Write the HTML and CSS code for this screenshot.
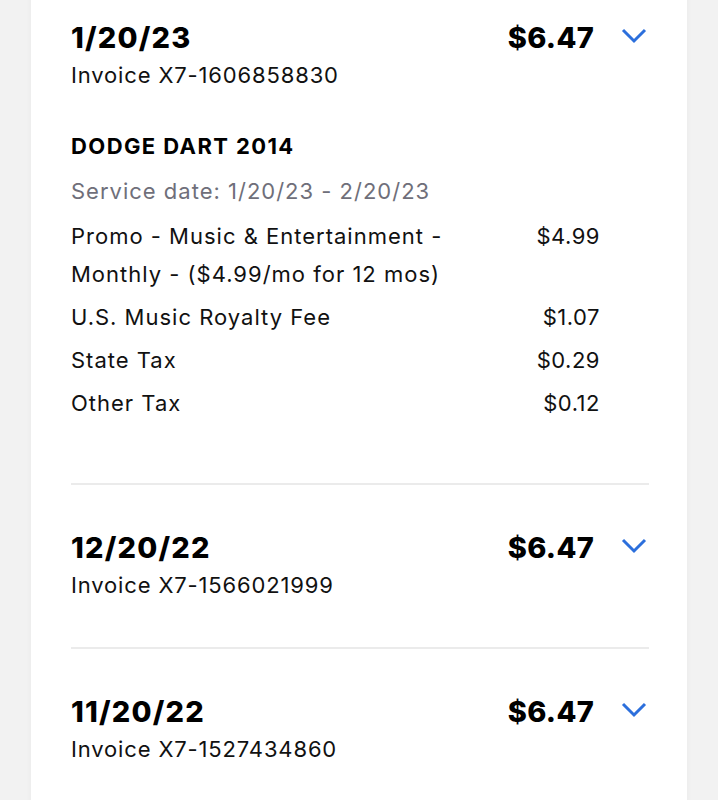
FILE: index.html
```html
<!DOCTYPE html>
<html lang="en">
<head>
    <meta charset="UTF-8">
    <meta name="viewport" content="width=device-width, initial-scale=1.0">
    <title>Billing History</title>
    <link rel="stylesheet" href="styles.css">
</head>
<body>
    <div class="card">
        <div class="invoice">
            <div class="invoice-head">
                <div class="invoice-title">
                    <div class="invoice-date">1/20/23</div>
                    <div class="invoice-number">Invoice X7-1606858830</div>
                </div>
                <div class="invoice-total">$6.47</div>
                <svg class="chevron" width="26" height="16" viewBox="0 0 26 16"><polyline points="2,2 13,13 24,2"/></svg>
            </div>
            <div class="invoice-details">
                <div class="vehicle">DODGE DART 2014</div>
                <div class="service-date">Service date: 1/20/23 - 2/20/23</div>
                <div class="items">
                    <div class="item">
                        <span class="item-name">Promo - Music &amp; Entertainment - Monthly - ($4.99/mo for 12 mos)</span>
                        <span class="item-price">$4.99</span>
                    </div>
                    <div class="item">
                        <span class="item-name">U.S. Music Royalty Fee</span>
                        <span class="item-price">$1.07</span>
                    </div>
                    <div class="item">
                        <span class="item-name">State Tax</span>
                        <span class="item-price">$0.29</span>
                    </div>
                    <div class="item">
                        <span class="item-name">Other Tax</span>
                        <span class="item-price">$0.12</span>
                    </div>
                </div>
            </div>
        </div>

        <div class="invoice">
            <div class="invoice-head">
                <div class="invoice-title">
                    <div class="invoice-date">12/20/22</div>
                    <div class="invoice-number">Invoice X7-1566021999</div>
                </div>
                <div class="invoice-total">$6.47</div>
                <svg class="chevron" width="26" height="16" viewBox="0 0 26 16"><polyline points="2,2 13,13 24,2"/></svg>
            </div>
        </div>

        <div class="invoice">
            <div class="invoice-head">
                <div class="invoice-title">
                    <div class="invoice-date">11/20/22</div>
                    <div class="invoice-number">Invoice X7-1527434860</div>
                </div>
                <div class="invoice-total">$6.47</div>
                <svg class="chevron" width="26" height="16" viewBox="0 0 26 16"><polyline points="2,2 13,13 24,2"/></svg>
            </div>
        </div>
    </div>
</body>
</html>
```

FILE: styles.css
```css
body {
    font-family: 'Inter', 'Noto Sans', sans-serif;
    margin: 0;
    background-color: #f2f2f2;
    color: #111;
    overflow: hidden;
}
.card {
    margin: -25px 31px 0;
    padding: 0 38px 0 40px;
    background-color: #fff;
    box-shadow: 0 0 6px rgba(0,0,0,0.04);
    min-height: 900px;
}
.invoice {
    padding: 45px 0 48px;
    border-bottom: 2px solid #ebebeb;
}
.invoice-head {
    display: flex;
    align-items: flex-start;
}
.invoice-title {
    flex-grow: 1;
}
.invoice-date {
    font-size: 29px;
    font-weight: 800;
    line-height: 36px;
    letter-spacing: 1.2px;
    color: #000;
}
.invoice-number {
    margin-top: 5px;
    font-size: 22px;
    line-height: 28px;
    letter-spacing: 0.85px;
}
.invoice-total {
    font-size: 29px;
    font-weight: 800;
    line-height: 36px;
    letter-spacing: 0.3px;
    color: #000;
    margin-right: 27px;
}
.chevron {
    margin-top: 8px;
    margin-right: 2px;
    fill: none;
    stroke: #2c6fdc;
    stroke-width: 3;
}
.invoice-details {
    padding-top: 43px;
    padding-bottom: 13px;
}
.vehicle {
    font-size: 22px;
    font-weight: 700;
    line-height: 28px;
    letter-spacing: 1.4px;
    color: #000;
}
.service-date {
    margin-top: 17px;
    font-size: 22px;
    line-height: 28px;
    letter-spacing: 1px;
    color: #6f6f7a;
}
.items {
    margin-top: 12px;
    width: 529px;
    display: flex;
    flex-direction: column;
    gap: 5px;
}
.item {
    display: flex;
    justify-content: space-between;
    font-size: 22px;
    line-height: 38px;
    letter-spacing: 1px;
}
.item-name {
    max-width: 390px;
}
.item-price {
    white-space: nowrap;
    letter-spacing: 0.5px;
}
```
